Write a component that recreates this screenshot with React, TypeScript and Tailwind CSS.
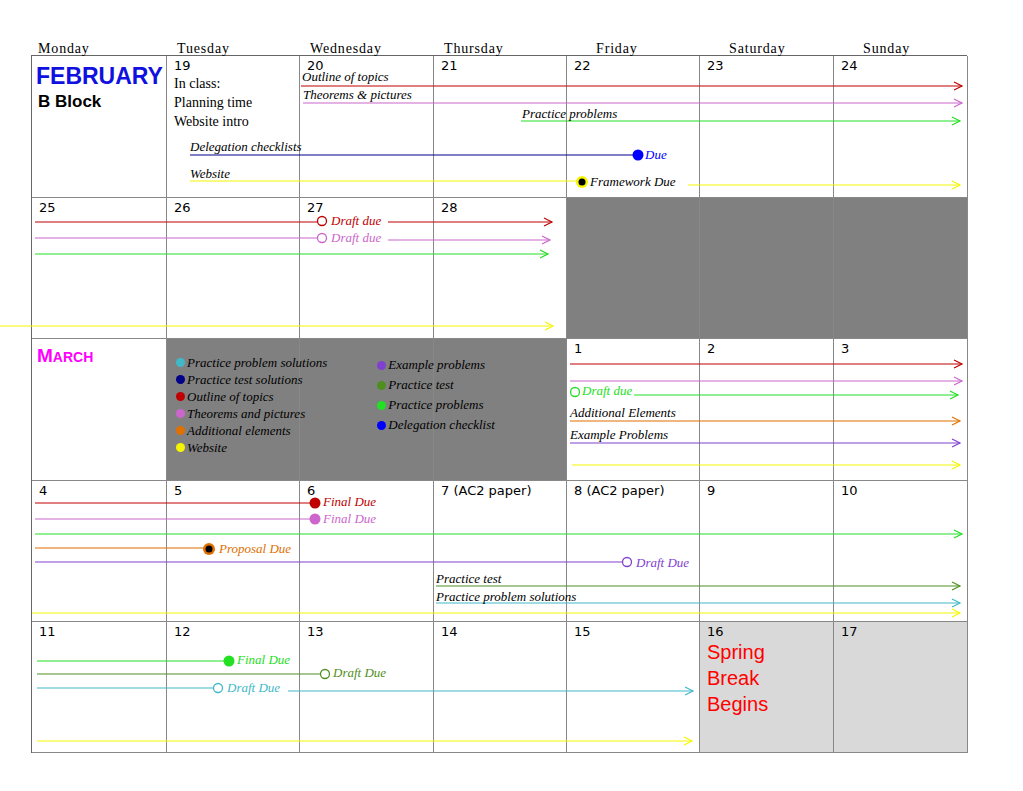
import React from "react";

const R = "#c00000", P = "#cc66cc", G = "#22e022", N = "#000088", Y = "#f5f500", O = "#e07000", V = "#8040d0", OL = "#4f8f20", T = "#40b8c8", B = "#0000ff";

type L = { x1: number; x2: number; y: number; c: string; a?: boolean };
const lines: L[] = [
  { x1: 301, x2: 962, y: 86, c: R, a: true },
  { x1: 303, x2: 962, y: 103, c: P, a: true },
  { x1: 521, x2: 960, y: 121, c: G, a: true },
  { x1: 190, x2: 638, y: 155, c: N },
  { x1: 190, x2: 582, y: 181, c: Y },
  { x1: 688, x2: 960, y: 185, c: Y, a: true },
  { x1: 35, x2: 318, y: 222, c: R },
  { x1: 388, x2: 552, y: 222, c: R, a: true },
  { x1: 35, x2: 318, y: 238, c: P },
  { x1: 388, x2: 550, y: 240, c: P, a: true },
  { x1: 35, x2: 548, y: 254, c: G, a: true },
  { x1: 0, x2: 553, y: 326, c: Y, a: true },
  { x1: 570, x2: 962, y: 364, c: R, a: true },
  { x1: 570, x2: 962, y: 381, c: P, a: true },
  { x1: 634, x2: 958, y: 395, c: G, a: true },
  { x1: 570, x2: 960, y: 421, c: O, a: true },
  { x1: 570, x2: 960, y: 443, c: V, a: true },
  { x1: 572, x2: 960, y: 465, c: Y, a: true },
  { x1: 35, x2: 315, y: 503, c: R },
  { x1: 35, x2: 315, y: 519, c: P },
  { x1: 35, x2: 962, y: 534, c: G, a: true },
  { x1: 35, x2: 209, y: 548, c: O },
  { x1: 35, x2: 623, y: 562, c: V },
  { x1: 436, x2: 960, y: 586, c: OL, a: true },
  { x1: 436, x2: 960, y: 603, c: T, a: true },
  { x1: 32, x2: 960, y: 613, c: Y, a: true },
  { x1: 37, x2: 229, y: 661, c: G },
  { x1: 37, x2: 321, y: 674, c: OL },
  { x1: 37, x2: 214, y: 688, c: T },
  { x1: 288, x2: 693, y: 691, c: T, a: true },
  { x1: 37, x2: 692, y: 741, c: Y, a: true },
];

type D = { x: number; y: number; c: string; k: "f" | "o" | "b" };
const dots: D[] = [
  { x: 638, y: 155, c: B, k: "f" },
  { x: 582, y: 182, c: Y, k: "b" },
  { x: 322, y: 221, c: R, k: "o" },
  { x: 322, y: 238, c: P, k: "o" },
  { x: 575, y: 392, c: G, k: "o" },
  { x: 315, y: 503, c: R, k: "f" },
  { x: 315, y: 519, c: P, k: "f" },
  { x: 209, y: 549, c: O, k: "b" },
  { x: 627, y: 562, c: V, k: "o" },
  { x: 229, y: 661, c: G, k: "f" },
  { x: 325, y: 674, c: OL, k: "o" },
  { x: 218, y: 688, c: T, k: "o" },
];

type Lb = { x: number; y: number; t: string; c: string };
const labels: Lb[] = [
  { x: 302, y: 69, t: "Outline of topics", c: "#000" },
  { x: 303, y: 87, t: "Theorems & pictures", c: "#000" },
  { x: 522, y: 106, t: "Practice problems", c: "#000" },
  { x: 190, y: 139, t: "Delegation checklists", c: "#000" },
  { x: 645, y: 147, t: "Due", c: B },
  { x: 190, y: 166, t: "Website", c: "#000" },
  { x: 590, y: 174, t: "Framework Due", c: "#000" },
  { x: 331, y: 213, t: "Draft due", c: R },
  { x: 331, y: 230, t: "Draft due", c: P },
  { x: 582, y: 383, t: "Draft due", c: G },
  { x: 570, y: 405, t: "Additional Elements", c: "#000" },
  { x: 570, y: 427, t: "Example Problems", c: "#000" },
  { x: 323, y: 494, t: "Final Due", c: R },
  { x: 323, y: 511, t: "Final Due", c: P },
  { x: 219, y: 541, t: "Proposal Due", c: O },
  { x: 636, y: 555, t: "Draft Due", c: V },
  { x: 436, y: 571, t: "Practice test", c: "#000" },
  { x: 436, y: 589, t: "Practice problem solutions", c: "#000" },
  { x: 237, y: 652, t: "Final Due", c: G },
  { x: 333, y: 665, t: "Draft Due", c: OL },
  { x: 227, y: 680, t: "Draft Due", c: T },
];

const legend1: [string, string][] = [
  [T, "Practice problem solutions"], [N, "Practice test solutions"], [R, "Outline of topics"],
  [P, "Theorems and pictures"], [O, "Additional elements"], [Y, "Website"],
];
const legend2: [string, string][] = [
  [V, "Example problems"], [OL, "Practice test"], [G, "Practice problems"], [B, "Delegation checklist"],
];

const days = ["Monday", "Tuesday", "Wednesday", "Thursday", "Friday", "Saturday", "Sunday"];
const rowsH = [142, 141, 142, 141, 131];
const cells: (string | null)[] = [
  "", "19", "20", "21", "22", "23", "24",
  "25", "26", "27", "28", "g", "g", "g",
  "", "g", "g", "g", "1", "2", "3",
  "4", "5", "6", "7 (AC2 paper)", "8 (AC2 paper)", "9", "10",
  "11", "12", "13", "14", "15", "16", "l17",
];

export default function App() {
  return (
    <div className="relative w-[1023px] h-[791px] bg-white overflow-hidden" style={{ fontFamily: "'Liberation Serif', serif" }}>
      <div className="pt-[38px] pl-[31px]">
        <div className="grid grid-cols-[135px_133px_134px_133px_133px_134px_134px] h-[17px] text-[14px] tracking-[0.06em] text-black">
          {days.map((d, i) => (
            <div key={d} className={i === 0 ? "pl-[7px]" : i < 4 ? "pl-[11px]" : "pl-[30px]"}>{d}</div>
          ))}
        </div>
        <div className="grid grid-cols-[135px_133px_134px_133px_133px_134px_134px] w-[936px] border-t border-l border-[#666]">
          {cells.map((c, i) => {
            const r = Math.floor(i / 7);
            const col = i % 7;
            const gray = c === "g";
            const light = r === 4 && col >= 5;
            return (
              <div
                key={i}
                className={`border-r border-b border-[#888] ${gray ? "bg-[#808080]" : light ? "bg-[#d9d9d9]" : "bg-white"}`}
                style={{ height: rowsH[r] }}
              >
                {c && c !== "g" && (
                  <div className="pl-[7px] text-[13px] text-black" style={{ fontFamily: "'DejaVu Sans', sans-serif" }}>
                    {c.replace("l", "")}
                  </div>
                )}
                {i === 0 && (
                  <div className="pl-[4px] pt-[6px]" style={{ fontFamily: "'Liberation Sans', sans-serif" }}>
                    <div className="text-[23px] font-bold text-[#1010e0] leading-[28px]">FEBRUARY</div>
                    <div className="text-[17px] font-bold text-black pl-[2px] leading-[24px]">B Block</div>
                  </div>
                )}
                {i === 1 && (
                  <div className="pl-[7px] text-[14px] leading-[19px] text-black -mt-[2px]">
                    <div>In class:</div><div>Planning time</div><div>Website intro</div>
                  </div>
                )}
                {i === 14 && (
                  <div className="pl-[5px] pt-[3px] text-[19px] font-bold text-[#ff00ff]" style={{ fontFamily: "'Liberation Sans', sans-serif" }}>
                    M<span className="text-[14px]">ARCH</span>
                  </div>
                )}
                {i === 33 && (
                  <div className="pl-[7px] -mt-[3px] text-[20px] leading-[26px] text-[#ff0000]" style={{ fontFamily: "'Liberation Sans', sans-serif" }}>
                    <div>Spring</div><div>Break</div><div>Begins</div>
                  </div>
                )}
              </div>
            );
          })}
        </div>
      </div>

      <div className="absolute left-[176px] top-[354px] flex gap-[50px] text-[13px] italic leading-[17px] text-black">
        <div>
          {legend1.map(([c, t]) => (
            <div key={t} className="flex items-center gap-[2px]"><span className="w-[9px] h-[9px] rounded-full" style={{ background: c }} />{t}</div>
          ))}
        </div>
        <div className="pt-[1px]">
          {legend2.map(([c, t]) => (
            <div key={t} className="flex items-center gap-[2px] leading-[20px]"><span className="w-[9px] h-[9px] rounded-full" style={{ background: c }} />{t}</div>
          ))}
        </div>
      </div>

      <svg className="absolute left-0 top-0" width={1023} height={791}>
        {lines.map((l, i) => (
          <g key={i} stroke={l.c} strokeWidth={1.2} fill="none">
            <line x1={l.x1} y1={l.y} x2={l.x2} y2={l.y} />
            {l.a && <polyline points={`${l.x2 - 8},${l.y - 4} ${l.x2},${l.y} ${l.x2 - 8},${l.y + 4}`} />}
          </g>
        ))}
        {dots.map((d, i) =>
          d.k === "f" ? <circle key={i} cx={d.x} cy={d.y} r={5.5} fill={d.c} /> :
          d.k === "o" ? <circle key={i} cx={d.x} cy={d.y} r={4.5} fill="white" stroke={d.c} strokeWidth={1.3} /> :
          <g key={i}><circle cx={d.x} cy={d.y} r={6} fill={d.c} /><circle cx={d.x} cy={d.y} r={3.5} fill="#000" /></g>
        )}
      </svg>

      {labels.map((l, i) => (
        <div key={i} className="absolute italic text-[13px] leading-[16px] whitespace-nowrap" style={{ left: l.x, top: l.y, color: l.c }}>
          {l.t}
        </div>
      ))}
    </div>
  );
}
